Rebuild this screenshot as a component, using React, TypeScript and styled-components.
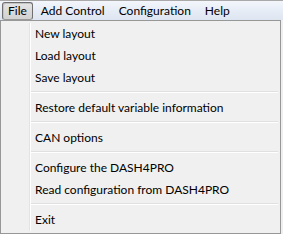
import React from "react";
import styled, { createGlobalStyle } from "styled-components";

const Global = createGlobalStyle`
  html, body { margin: 0; padding: 0; background: #efefef; }
  body { font-family: Lato, "Noto Sans", sans-serif; font-size: 12px; color: #000; }
`;

const Page = styled.div`
  width: 283px;
  height: 234px;
  display: flex;
  flex-direction: column;
  overflow: hidden;
  background: #efefef;
`;

const MenuBar = styled.div`
  height: 19px;
  display: flex;
  align-items: stretch;
  padding: 0 0 0 2px;
  border-top: 1px solid #a9a9a9;
  background: linear-gradient(#f3f6fb 0%, #e7edf6 50%, #dde5f1 100%);
`;

const BarItem = styled.div<{ $open?: boolean }>`
  display: flex;
  align-items: center;
  padding: 0 5px 0 5px;
  margin-top: 1px;
  margin-right: 2px;
  line-height: 16px;
  border-radius: 3px;
  border: 1px solid ${(p) => (p.$open ? "#6f6f6f" : "transparent")};
  border-bottom-color: ${(p) => (p.$open ? "#9a9a9a" : "transparent")};
  background: ${(p) =>
    p.$open ? "linear-gradient(#e6e6e6, #dadada 50%, #d2d2d2)" : "transparent"};
  box-shadow: ${(p) => (p.$open ? "inset 1px 1px 0 #c4c4c4" : "none")};
`;

const Popup = styled.div`
  width: 279px;
  height: 211px;
  border: 1px solid #979797;
  background: #f0f0f0;
  padding: 1px 0 0 0;
  display: flex;
  flex-direction: column;
  position: relative;
  box-sizing: content-box;
`;

const Gutter = styled.div`
  position: absolute;
  top: 2px;
  bottom: 2px;
  left: 28px;
  width: 1px;
  background: #e2e3e3;
  border-right: 1px solid #ffffff;
`;

const Item = styled.div`
  height: 22px;
  display: flex;
  align-items: center;
  padding-left: 32px;
  margin: 0 2px;
  white-space: nowrap;
`;

const Separator = styled.div`
  height: 8px;
  margin-left: 30px;
  margin-right: 2px;
  display: flex;
  flex-direction: column;
  justify-content: center;
  &::before {
    content: "";
    height: 1px;
    background: #e0e0e0;
  }
  &::after {
    content: "";
    height: 1px;
    background: #ffffff;
  }
`;

type Entry = { label: string } | { sep: true };

const entries: Entry[] = [
  { label: "New layout" },
  { label: "Load layout" },
  { label: "Save layout" },
  { sep: true },
  { label: "Restore default variable information" },
  { sep: true },
  { label: "CAN options" },
  { sep: true },
  { label: "Configure the DASH4PRO" },
  { label: "Read configuration from DASH4PRO" },
  { sep: true },
  { label: "Exit" },
];

export default function App() {
  return (
    <>
      <Global />
      <Page>
        <MenuBar>
          <BarItem $open>File</BarItem>
          <BarItem>Add Control</BarItem>
          <BarItem>Configuration</BarItem>
          <BarItem>Help</BarItem>
        </MenuBar>
        <Popup>
          <Gutter />
          {entries.map((e, i) =>
            "sep" in e ? <Separator key={i} /> : <Item key={i}>{e.label}</Item>
          )}
        </Popup>
      </Page>
    </>
  );
}
